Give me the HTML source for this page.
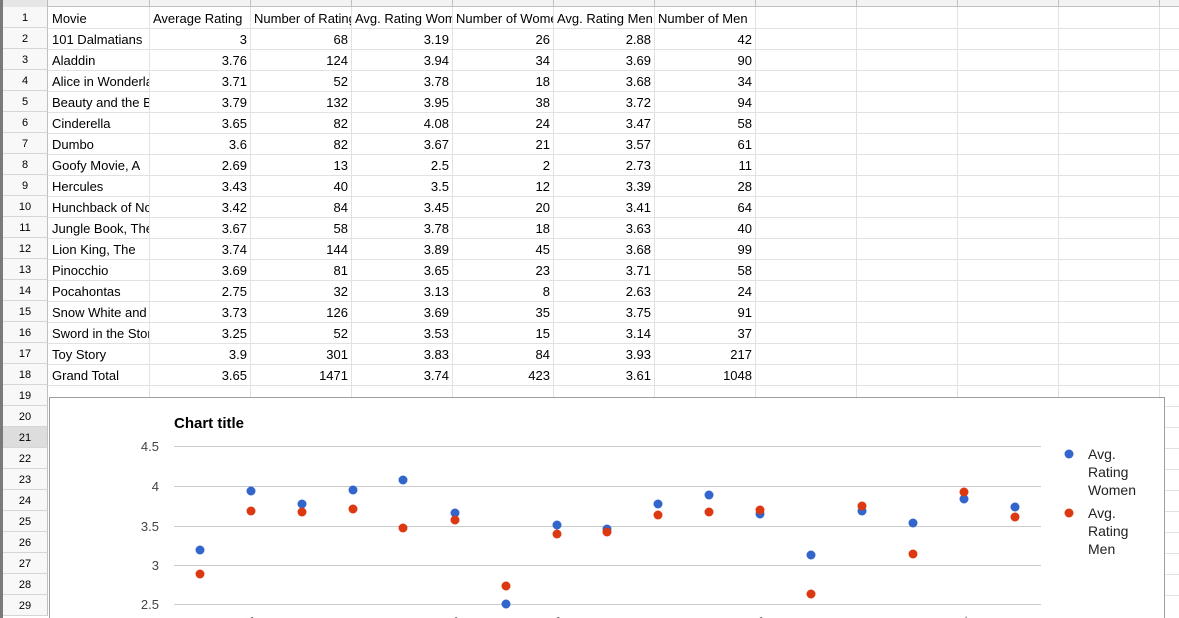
<!DOCTYPE html>
<html><head><meta charset="utf-8"><style>
*{margin:0;padding:0;box-sizing:border-box}
body{width:1179px;height:618px;overflow:hidden;background:#fff;font-family:"Liberation Sans",Arial,sans-serif;font-size:13px;color:#000;position:relative}
.g{position:absolute;left:0;top:0}
.c{position:absolute;height:21px;line-height:21px;overflow:hidden;white-space:nowrap;padding:1px 3px 0}
.r{text-align:right}
.rh{position:absolute;left:3px;width:45px;height:21px;line-height:21px;padding-top:1px;text-align:center;font-size:11px;background:#f8f8f8;border-bottom:1px solid #d6d6d6;border-right:1px solid #c0c0c0}
</style></head><body>
<div style="position:absolute;left:0;top:0;width:3px;height:618px;background:#7a7a7a"></div>
<div style="position:absolute;left:3px;top:0;width:1176px;height:7px;background:#f3f3f3;border-bottom:1px solid #c0c0c0"></div>
<div style="position:absolute;left:3px;top:0;width:45px;height:7px;background:#e6e6e6;border-right:1px solid #bbb"></div>
<svg class="g" width="1179" height="618">
<g stroke="#e2e2e2" stroke-width="1">
<line x1="48" y1="28.5" x2="1179" y2="28.5"/><line x1="48" y1="49.5" x2="1179" y2="49.5"/><line x1="48" y1="70.5" x2="1179" y2="70.5"/><line x1="48" y1="91.5" x2="1179" y2="91.5"/><line x1="48" y1="112.5" x2="1179" y2="112.5"/><line x1="48" y1="133.5" x2="1179" y2="133.5"/><line x1="48" y1="154.5" x2="1179" y2="154.5"/><line x1="48" y1="175.5" x2="1179" y2="175.5"/><line x1="48" y1="196.5" x2="1179" y2="196.5"/><line x1="48" y1="217.5" x2="1179" y2="217.5"/><line x1="48" y1="238.5" x2="1179" y2="238.5"/><line x1="48" y1="259.5" x2="1179" y2="259.5"/><line x1="48" y1="280.5" x2="1179" y2="280.5"/><line x1="48" y1="301.5" x2="1179" y2="301.5"/><line x1="48" y1="322.5" x2="1179" y2="322.5"/><line x1="48" y1="343.5" x2="1179" y2="343.5"/><line x1="48" y1="364.5" x2="1179" y2="364.5"/><line x1="48" y1="385.5" x2="1179" y2="385.5"/>
<line x1="1165" y1="406.5" x2="1179" y2="406.5"/><line x1="1165" y1="427.5" x2="1179" y2="427.5"/><line x1="1165" y1="448.5" x2="1179" y2="448.5"/><line x1="1165" y1="469.5" x2="1179" y2="469.5"/><line x1="1165" y1="490.5" x2="1179" y2="490.5"/><line x1="1165" y1="511.5" x2="1179" y2="511.5"/><line x1="1165" y1="532.5" x2="1179" y2="532.5"/><line x1="1165" y1="553.5" x2="1179" y2="553.5"/><line x1="1165" y1="574.5" x2="1179" y2="574.5"/><line x1="1165" y1="595.5" x2="1179" y2="595.5"/>
<line x1="149.5" y1="0" x2="149.5" y2="397"/><line x1="250.5" y1="0" x2="250.5" y2="397"/><line x1="351.5" y1="0" x2="351.5" y2="397"/><line x1="452.5" y1="0" x2="452.5" y2="397"/><line x1="553.5" y1="0" x2="553.5" y2="397"/><line x1="654.5" y1="0" x2="654.5" y2="397"/><line x1="755.5" y1="0" x2="755.5" y2="397"/><line x1="856.5" y1="0" x2="856.5" y2="397"/><line x1="957.5" y1="0" x2="957.5" y2="397"/><line x1="1058.5" y1="0" x2="1058.5" y2="397"/><line x1="1159.5" y1="0" x2="1159.5" y2="618"/>
</g>
<g stroke="#c0c0c0"><line x1="149.5" y1="0" x2="149.5" y2="7"/><line x1="250.5" y1="0" x2="250.5" y2="7"/><line x1="351.5" y1="0" x2="351.5" y2="7"/><line x1="452.5" y1="0" x2="452.5" y2="7"/><line x1="553.5" y1="0" x2="553.5" y2="7"/><line x1="654.5" y1="0" x2="654.5" y2="7"/><line x1="755.5" y1="0" x2="755.5" y2="7"/><line x1="856.5" y1="0" x2="856.5" y2="7"/><line x1="957.5" y1="0" x2="957.5" y2="7"/><line x1="1058.5" y1="0" x2="1058.5" y2="7"/><line x1="1159.5" y1="0" x2="1159.5" y2="7"/></g>
</svg>
<div class="rh" style="top:7px">1</div><div class="rh" style="top:28px">2</div><div class="rh" style="top:49px">3</div><div class="rh" style="top:70px">4</div><div class="rh" style="top:91px">5</div><div class="rh" style="top:112px">6</div><div class="rh" style="top:133px">7</div><div class="rh" style="top:154px">8</div><div class="rh" style="top:175px">9</div><div class="rh" style="top:196px">10</div><div class="rh" style="top:217px">11</div><div class="rh" style="top:238px">12</div><div class="rh" style="top:259px">13</div><div class="rh" style="top:280px">14</div><div class="rh" style="top:301px">15</div><div class="rh" style="top:322px">16</div><div class="rh" style="top:343px">17</div><div class="rh" style="top:364px">18</div><div class="rh" style="top:385px">19</div><div class="rh" style="top:406px">20</div><div class="rh" style="top:427px;background:#dddddd">21</div><div class="rh" style="top:448px">22</div><div class="rh" style="top:469px">23</div><div class="rh" style="top:490px">24</div><div class="rh" style="top:511px">25</div><div class="rh" style="top:532px">26</div><div class="rh" style="top:553px">27</div><div class="rh" style="top:574px">28</div><div class="rh" style="top:595px">29</div>

<div style="position:absolute;left:49px;top:7px">
<div class="c" style="left:0;top:0;width:100px">Movie</div>
<div class="c" style="left:101px;top:0;width:100px">Average Rating</div>
<div class="c" style="left:202px;top:0;width:100px">Number of Ratings</div>
<div class="c" style="left:303px;top:0;width:100px">Avg. Rating Women</div>
<div class="c" style="left:404px;top:0;width:100px">Number of Women</div>
<div class="c" style="left:505px;top:0;width:100px">Avg. Rating Men</div>
<div class="c" style="left:606px;top:0;width:100px">Number of Men</div>
</div>
<div id="t" style="position:absolute;left:49px;top:28px">
<div style="position:absolute;top:0"><div class="c" style="left:0;width:100px">101 Dalmatians</div><div class="c r" style="left:101px;width:100px">3</div><div class="c r" style="left:202px;width:100px">68</div><div class="c r" style="left:303px;width:100px">3.19</div><div class="c r" style="left:404px;width:100px">26</div><div class="c r" style="left:505px;width:100px">2.88</div><div class="c r" style="left:606px;width:100px">42</div></div>
<div style="position:absolute;top:21px"><div class="c" style="left:0;width:100px">Aladdin</div><div class="c r" style="left:101px;width:100px">3.76</div><div class="c r" style="left:202px;width:100px">124</div><div class="c r" style="left:303px;width:100px">3.94</div><div class="c r" style="left:404px;width:100px">34</div><div class="c r" style="left:505px;width:100px">3.69</div><div class="c r" style="left:606px;width:100px">90</div></div>
<div style="position:absolute;top:42px"><div class="c" style="left:0;width:100px">Alice in Wonderland</div><div class="c r" style="left:101px;width:100px">3.71</div><div class="c r" style="left:202px;width:100px">52</div><div class="c r" style="left:303px;width:100px">3.78</div><div class="c r" style="left:404px;width:100px">18</div><div class="c r" style="left:505px;width:100px">3.68</div><div class="c r" style="left:606px;width:100px">34</div></div>
<div style="position:absolute;top:63px"><div class="c" style="left:0;width:100px">Beauty and the Beast</div><div class="c r" style="left:101px;width:100px">3.79</div><div class="c r" style="left:202px;width:100px">132</div><div class="c r" style="left:303px;width:100px">3.95</div><div class="c r" style="left:404px;width:100px">38</div><div class="c r" style="left:505px;width:100px">3.72</div><div class="c r" style="left:606px;width:100px">94</div></div>
<div style="position:absolute;top:84px"><div class="c" style="left:0;width:100px">Cinderella</div><div class="c r" style="left:101px;width:100px">3.65</div><div class="c r" style="left:202px;width:100px">82</div><div class="c r" style="left:303px;width:100px">4.08</div><div class="c r" style="left:404px;width:100px">24</div><div class="c r" style="left:505px;width:100px">3.47</div><div class="c r" style="left:606px;width:100px">58</div></div>
<div style="position:absolute;top:105px"><div class="c" style="left:0;width:100px">Dumbo</div><div class="c r" style="left:101px;width:100px">3.6</div><div class="c r" style="left:202px;width:100px">82</div><div class="c r" style="left:303px;width:100px">3.67</div><div class="c r" style="left:404px;width:100px">21</div><div class="c r" style="left:505px;width:100px">3.57</div><div class="c r" style="left:606px;width:100px">61</div></div>
<div style="position:absolute;top:126px"><div class="c" style="left:0;width:100px">Goofy Movie, A</div><div class="c r" style="left:101px;width:100px">2.69</div><div class="c r" style="left:202px;width:100px">13</div><div class="c r" style="left:303px;width:100px">2.5</div><div class="c r" style="left:404px;width:100px">2</div><div class="c r" style="left:505px;width:100px">2.73</div><div class="c r" style="left:606px;width:100px">11</div></div>
<div style="position:absolute;top:147px"><div class="c" style="left:0;width:100px">Hercules</div><div class="c r" style="left:101px;width:100px">3.43</div><div class="c r" style="left:202px;width:100px">40</div><div class="c r" style="left:303px;width:100px">3.5</div><div class="c r" style="left:404px;width:100px">12</div><div class="c r" style="left:505px;width:100px">3.39</div><div class="c r" style="left:606px;width:100px">28</div></div>
<div style="position:absolute;top:168px"><div class="c" style="left:0;width:100px">Hunchback of Notre Dame</div><div class="c r" style="left:101px;width:100px">3.42</div><div class="c r" style="left:202px;width:100px">84</div><div class="c r" style="left:303px;width:100px">3.45</div><div class="c r" style="left:404px;width:100px">20</div><div class="c r" style="left:505px;width:100px">3.41</div><div class="c r" style="left:606px;width:100px">64</div></div>
<div style="position:absolute;top:189px"><div class="c" style="left:0;width:100px">Jungle Book, The</div><div class="c r" style="left:101px;width:100px">3.67</div><div class="c r" style="left:202px;width:100px">58</div><div class="c r" style="left:303px;width:100px">3.78</div><div class="c r" style="left:404px;width:100px">18</div><div class="c r" style="left:505px;width:100px">3.63</div><div class="c r" style="left:606px;width:100px">40</div></div>
<div style="position:absolute;top:210px"><div class="c" style="left:0;width:100px">Lion King, The</div><div class="c r" style="left:101px;width:100px">3.74</div><div class="c r" style="left:202px;width:100px">144</div><div class="c r" style="left:303px;width:100px">3.89</div><div class="c r" style="left:404px;width:100px">45</div><div class="c r" style="left:505px;width:100px">3.68</div><div class="c r" style="left:606px;width:100px">99</div></div>
<div style="position:absolute;top:231px"><div class="c" style="left:0;width:100px">Pinocchio</div><div class="c r" style="left:101px;width:100px">3.69</div><div class="c r" style="left:202px;width:100px">81</div><div class="c r" style="left:303px;width:100px">3.65</div><div class="c r" style="left:404px;width:100px">23</div><div class="c r" style="left:505px;width:100px">3.71</div><div class="c r" style="left:606px;width:100px">58</div></div>
<div style="position:absolute;top:252px"><div class="c" style="left:0;width:100px">Pocahontas</div><div class="c r" style="left:101px;width:100px">2.75</div><div class="c r" style="left:202px;width:100px">32</div><div class="c r" style="left:303px;width:100px">3.13</div><div class="c r" style="left:404px;width:100px">8</div><div class="c r" style="left:505px;width:100px">2.63</div><div class="c r" style="left:606px;width:100px">24</div></div>
<div style="position:absolute;top:273px"><div class="c" style="left:0;width:100px">Snow White and the Seven Dwarfs</div><div class="c r" style="left:101px;width:100px">3.73</div><div class="c r" style="left:202px;width:100px">126</div><div class="c r" style="left:303px;width:100px">3.69</div><div class="c r" style="left:404px;width:100px">35</div><div class="c r" style="left:505px;width:100px">3.75</div><div class="c r" style="left:606px;width:100px">91</div></div>
<div style="position:absolute;top:294px"><div class="c" style="left:0;width:100px">Sword in the Stone</div><div class="c r" style="left:101px;width:100px">3.25</div><div class="c r" style="left:202px;width:100px">52</div><div class="c r" style="left:303px;width:100px">3.53</div><div class="c r" style="left:404px;width:100px">15</div><div class="c r" style="left:505px;width:100px">3.14</div><div class="c r" style="left:606px;width:100px">37</div></div>
<div style="position:absolute;top:315px"><div class="c" style="left:0;width:100px">Toy Story</div><div class="c r" style="left:101px;width:100px">3.9</div><div class="c r" style="left:202px;width:100px">301</div><div class="c r" style="left:303px;width:100px">3.83</div><div class="c r" style="left:404px;width:100px">84</div><div class="c r" style="left:505px;width:100px">3.93</div><div class="c r" style="left:606px;width:100px">217</div></div>
<div style="position:absolute;top:336px"><div class="c" style="left:0;width:100px">Grand Total</div><div class="c r" style="left:101px;width:100px">3.65</div><div class="c r" style="left:202px;width:100px">1471</div><div class="c r" style="left:303px;width:100px">3.74</div><div class="c r" style="left:404px;width:100px">423</div><div class="c r" style="left:505px;width:100px">3.61</div><div class="c r" style="left:606px;width:100px">1048</div></div>
</div>

<svg style="position:absolute;left:49px;top:397px" width="1117" height="221">
<rect x="0.5" y="0.5" width="1115" height="230" fill="#fff" stroke="#9e9e9e"/>
<text x="125" y="31" font-family="Liberation Sans,Arial,sans-serif" font-size="15" font-weight="bold">Chart title</text>
<g stroke="#cccccc"><line x1="125" y1="49.5" x2="992" y2="49.5"/><line x1="125" y1="89.5" x2="992" y2="89.5"/><line x1="125" y1="129.5" x2="992" y2="129.5"/><line x1="125" y1="168.5" x2="992" y2="168.5"/><line x1="125" y1="207.5" x2="992" y2="207.5"/></g>
<g font-family="Liberation Sans,Arial,sans-serif" font-size="13" fill="#444" text-anchor="end"><text x="110" y="54">4.5</text><text x="110" y="94">4</text><text x="110" y="134">3.5</text><text x="110" y="173">3</text><text x="110" y="212">2.5</text></g>
<g fill="#3366cc">
<circle cx="151" cy="153" r="4.5"/><circle cx="202" cy="94" r="4.5"/><circle cx="253" cy="107" r="4.5"/><circle cx="304" cy="93" r="4.5"/><circle cx="354" cy="83" r="4.5"/><circle cx="406" cy="116" r="4.5"/><circle cx="457" cy="207" r="4.5"/><circle cx="508" cy="128" r="4.5"/><circle cx="558" cy="132" r="4.5"/><circle cx="609" cy="107" r="4.5"/><circle cx="660" cy="98" r="4.5"/><circle cx="711" cy="117" r="4.5"/><circle cx="762" cy="158" r="4.5"/><circle cx="813" cy="114" r="4.5"/><circle cx="864" cy="126" r="4.5"/><circle cx="915" cy="102" r="4.5"/><circle cx="966" cy="110" r="4.5"/>
<circle cx="1020" cy="57" r="4.5"/></g>
<g fill="#dc3912">
<circle cx="151" cy="177" r="4.5"/><circle cx="202" cy="114" r="4.5"/><circle cx="253" cy="115" r="4.5"/><circle cx="304" cy="112" r="4.5"/><circle cx="354" cy="131" r="4.5"/><circle cx="406" cy="123" r="4.5"/><circle cx="457" cy="189" r="4.5"/><circle cx="508" cy="137" r="4.5"/><circle cx="558" cy="135" r="4.5"/><circle cx="609" cy="118" r="4.5"/><circle cx="660" cy="115" r="4.5"/><circle cx="711" cy="113" r="4.5"/><circle cx="762" cy="197" r="4.5"/><circle cx="813" cy="109" r="4.5"/><circle cx="864" cy="157" r="4.5"/><circle cx="915" cy="95" r="4.5"/><circle cx="966" cy="120" r="4.5"/>
<circle cx="1020" cy="116" r="4.5"/></g>
<g font-family="Liberation Sans,Arial,sans-serif" font-size="14" fill="#222">
<text x="1039" y="62">Avg.</text><text x="1039" y="80">Rating</text><text x="1039" y="98">Women</text>
<text x="1039" y="121">Avg.</text><text x="1039" y="139">Rating</text><text x="1039" y="157">Men</text></g>
<g font-family="Liberation Sans,Arial,sans-serif" font-size="10" fill="#444" text-anchor="end">
<text transform="translate(156,224) rotate(-30)">101 Dal...</text><text transform="translate(207,224) rotate(-30)">Aladdin</text><text transform="translate(258,224) rotate(-30)">Alice in...</text><text transform="translate(309,224) rotate(-30)">Beauty...</text><text transform="translate(359,224) rotate(-30)">Cinder...</text><text transform="translate(411,224) rotate(-30)">Dumbo</text><text transform="translate(462,224) rotate(-30)">Goofy...</text><text transform="translate(513,224) rotate(-30)">Hercules</text><text transform="translate(563,224) rotate(-30)">Hunchb...</text><text transform="translate(614,224) rotate(-30)">Jungle...</text><text transform="translate(665,224) rotate(-30)">Lion K...</text><text transform="translate(716,224) rotate(-30)">Pinocchio</text><text transform="translate(767,224) rotate(-30)">Pocah...</text><text transform="translate(818,224) rotate(-30)">Snow...</text><text transform="translate(869,224) rotate(-30)">Sword...</text><text transform="translate(920,224) rotate(-30)">Toy Story</text><text transform="translate(971,224) rotate(-30)">Grand...</text>
</g>
</svg>
</body></html>
